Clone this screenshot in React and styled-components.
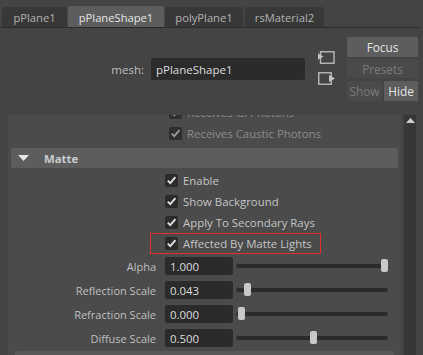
import React from 'react';
import styled, { createGlobalStyle } from 'styled-components';

const GlobalStyle = createGlobalStyle`
  html, body {
    margin: 0;
    padding: 0;
    background: #444444;
    font-family: "Open Sans", "Liberation Sans", sans-serif;
    font-size: 11px;
    color: #c4c4c4;
  }
`;

const Window = styled.div`
  width: 423px;
  height: 355px;
  overflow: hidden;
  background: #444444;
  display: flex;
  flex-direction: column;
`;

const TabBar = styled.div`
  display: flex;
  align-items: flex-end;
  gap: 1px;
  height: 28px;
  padding-left: 2px;
  margin-right: 4px;
  border-bottom: 1px solid #2c2c2c;
  box-sizing: border-box;
  flex-shrink: 0;
`;

const Tab = styled.div`
  height: ${(p) => (p.$active ? 21 : 20)}px;
  width: ${(p) => p.$w}px;
  margin-right: ${(p) => p.$gap || 0}px;
  display: flex;
  align-items: center;
  justify-content: center;
  background: ${(p) => (p.$active ? '#5d5d5d' : '#383838')};
  color: ${(p) => (p.$active ? '#e4e4e4' : '#b2b2b2')};
  border-radius: 3px 3px 0 0;
  box-sizing: border-box;
  padding-top: 1px;
  font-size: 11.2px;
`;

const Header = styled.div`
  height: 87px;
  flex-shrink: 0;
  box-sizing: border-box;
  display: flex;
  justify-content: flex-end;
  align-items: flex-start;
  padding: 9px 5px 0 0;
`;

const MeshGroup = styled.div`
  margin-top: 21px;
  display: flex;
  align-items: center;
  gap: 7px;
`;

const MeshLabel = styled.span`
  color: #bdbdbd;
  font-size: 11.5px;
`;

const TextField = styled.div`
  width: 154px;
  height: 22px;
  background: #2b2b2b;
  border-radius: 2px;
  display: flex;
  align-items: center;
  padding-left: 5px;
  box-sizing: border-box;
  color: #dcdcdc;
  font-size: 11.5px;
`;

const IconColumn = styled.div`
  margin: 14px 0 0 13px;
  display: flex;
  flex-direction: column;
  gap: 8px;
`;

const ButtonColumn = styled.div`
  margin-left: 12px;
  width: 71px;
  display: flex;
  flex-direction: column;
  gap: 2px;
`;

const ButtonRow = styled.div`
  display: flex;
  gap: 2px;
  margin-top: 1px;
`;

const Button = styled.div`
  width: ${(p) => (p.$w ? `${p.$w}px` : 'auto')};
  height: ${(p) => p.$h || 20}px;
  flex-shrink: 0;
  display: flex;
  align-items: center;
  justify-content: center;
  background: ${(p) => (p.$disabled ? '#4a4a4a' : '#5d5d5d')};
  color: ${(p) => (p.$disabled ? '#7a7a7a' : '#e6e6e6')};
  border-radius: 1px;
  font-size: 11.8px;
`;

const Body = styled.div`
  flex: 1;
  display: flex;
  min-height: 0;
`;

const Panel = styled.div`
  margin-left: 8px;
  width: 393px;
  background: #4b4b4b;
  overflow: hidden;
`;

const ScrollContent = styled.div`
  margin-top: -13px;
  display: flex;
  flex-direction: column;
`;

const Scrollbar = styled.div`
  margin-left: 3px;
  width: 12px;
  background: #373737;
  display: flex;
  justify-content: center;
  padding-top: 3px;
  box-sizing: border-box;
`;

const Row = styled.div`
  position: relative;
  display: grid;
  grid-template-columns: 148px 1fr;
  column-gap: 9px;
  align-items: center;
  height: ${(p) => p.$h}px;
  flex-shrink: 0;

  ${(p) =>
    p.$highlight &&
    `
    &::after {
      content: '';
      position: absolute;
      left: 142px;
      top: 0;
      width: 171px;
      height: 21px;
      border: 1px solid #e0302e;
      box-sizing: border-box;
      pointer-events: none;
    }
  `}
`;

const Label = styled.span`
  text-align: right;
  color: #bfbfbf;
  white-space: nowrap;
`;

const CheckWrap = styled.div`
  grid-column: 2;
  display: flex;
  align-items: center;
  gap: 5px;
  margin-left: ${(p) => p.$indent || 0}px;
  color: ${(p) => (p.$dim ? '#8c8c8c' : '#c4c4c4')};
  white-space: nowrap;
  font-size: 11.4px;
`;

const Box = styled.div`
  width: 13px;
  height: 13px;
  flex-shrink: 0;
  border-radius: 2px;
  background: ${(p) => (p.$dim ? '#2f2f2f' : '#2b2b2b')};
  display: flex;
  align-items: center;
  justify-content: center;
`;

const SectionHeader = styled.div`
  margin: 4px 3px 2px;
  height: 20px;
  flex-shrink: 0;
  border-radius: 2px;
  background: #5d5d5d;
  display: flex;
  align-items: center;
  padding-left: 7px;
  gap: 15px;
  font-weight: bold;
  font-size: 11.4px;
  color: #c9ccd0;
`;

const SubHeader = styled.div`
  margin: 1px 7px 0;
  height: 20px;
  flex-shrink: 0;
  border-radius: 2px;
  background: #585858;
`;

const Control = styled.div`
  display: flex;
  align-items: center;
`;

const NumberField = styled.div`
  width: 68px;
  height: 18px;
  background: #2b2b2b;
  border-radius: 2px;
  display: flex;
  align-items: center;
  padding-left: 5px;
  box-sizing: border-box;
  color: #dcdcdc;
  font-size: 11.4px;
`;

const Track = styled.div`
  position: relative;
  margin-left: 3px;
  width: 152px;
  height: 4px;
  border-radius: 2px;
  background: #2b2b2b;
`;

const Handle = styled.div`
  position: absolute;
  top: -5px;
  width: 7px;
  height: 13px;
  border-radius: 2px;
  background: #c8c8c8;
`;

const Check = ({ dim }) => (
  <Box $dim={dim}>
    <svg width="11" height="11" viewBox="0 0 11 11">
      <path
        d="M1.8 5.6 L4.3 8.2 L9.4 2.2"
        fill="none"
        stroke={dim ? '#9a9a9a' : '#e2e2e2'}
        strokeWidth="1.9"
      />
    </svg>
  </Box>
);

const CheckRow = ({ label, dim, indent, highlight }) => (
  <Row $h={21} $highlight={highlight}>
    <CheckWrap $dim={dim} $indent={indent}>
      <Check dim={dim} />
      <span>{label}</span>
    </CheckWrap>
  </Row>
);

const SliderRow = ({ label, value }) => (
  <Row $h={24}>
    <Label>{label}</Label>
    <Control>
      <NumberField>{value.toFixed(3)}</NumberField>
      <Track>
        <Handle style={{ left: 2 + value * 143 }} />
      </Track>
    </Control>
  </Row>
);

const InputIcon = () => (
  <svg width="17" height="13" viewBox="0 0 17 13">
    <rect x="2.5" y="0.75" width="13.5" height="11.5" fill="none" stroke="#b8b8b8" strokeWidth="1.4" />
    <path d="M0 2.5 L5.5 5.5 L0 8.5 Z" fill="#c4c4c4" />
  </svg>
);

const OutputIcon = () => (
  <svg width="17" height="13" viewBox="0 0 17 13">
    <rect x="0.75" y="0.75" width="12.5" height="11.5" fill="none" stroke="#b8b8b8" strokeWidth="1.4" />
    <path d="M11 3 L17 6.5 L11 10 Z" fill="#c4c4c4" />
  </svg>
);

const tabs = [
  { name: 'pPlane1', w: 65 },
  { name: 'pPlaneShape1', w: 96, active: true },
  { name: 'polyPlane1', w: 78, gap: 1 },
  { name: 'rsMaterial2', w: 79 },
];

const sliders = [
  { label: 'Alpha', value: 1 },
  { label: 'Reflection Scale', value: 0.043 },
  { label: 'Refraction Scale', value: 0 },
  { label: 'Diffuse Scale', value: 0.5 },
];

export default function App() {
  return (
    <>
      <GlobalStyle />
      <Window>
        <TabBar>
          {tabs.map((t) => (
            <Tab key={t.name} $active={t.active} $w={t.w} $gap={t.gap}>
              {t.name}
            </Tab>
          ))}
        </TabBar>

        <Header>
          <MeshGroup>
            <MeshLabel>mesh:</MeshLabel>
            <TextField>pPlaneShape1</TextField>
          </MeshGroup>
          <IconColumn>
            <InputIcon />
            <OutputIcon />
          </IconColumn>
          <ButtonColumn>
            <Button>Focus</Button>
            <Button $disabled $h={19}>Presets</Button>
            <ButtonRow>
              <Button $disabled $w={35}>Show</Button>
              <Button $w={34}>Hide</Button>
            </ButtonRow>
          </ButtonColumn>
        </Header>

        <Body>
          <Panel>
            <ScrollContent>
              <CheckRow label="Receives GI Photons" dim indent={4} />
              <CheckRow label="Receives Caustic Photons" dim indent={4} />
              <SectionHeader>
                <svg width="11" height="6" viewBox="0 0 11 6">
                  <path d="M0 0 L11 0 L5.5 6 Z" fill="#e6e6e6" />
                </svg>
                <span>Matte</span>
              </SectionHeader>
              <CheckRow label="Enable" />
              <CheckRow label="Show Background" />
              <CheckRow label="Apply To Secondary Rays" />
              <CheckRow label="Affected By Matte Lights" highlight />
              {sliders.map((s) => (
                <SliderRow key={s.label} label={s.label} value={s.value} />
              ))}
              <SubHeader />
            </ScrollContent>
          </Panel>
          <Scrollbar>
            <svg width="9" height="5" viewBox="0 0 9 5">
              <path d="M0 5 L4.5 0 L9 5 Z" fill="#cfcfcf" />
            </svg>
          </Scrollbar>
        </Body>
      </Window>
    </>
  );
}
